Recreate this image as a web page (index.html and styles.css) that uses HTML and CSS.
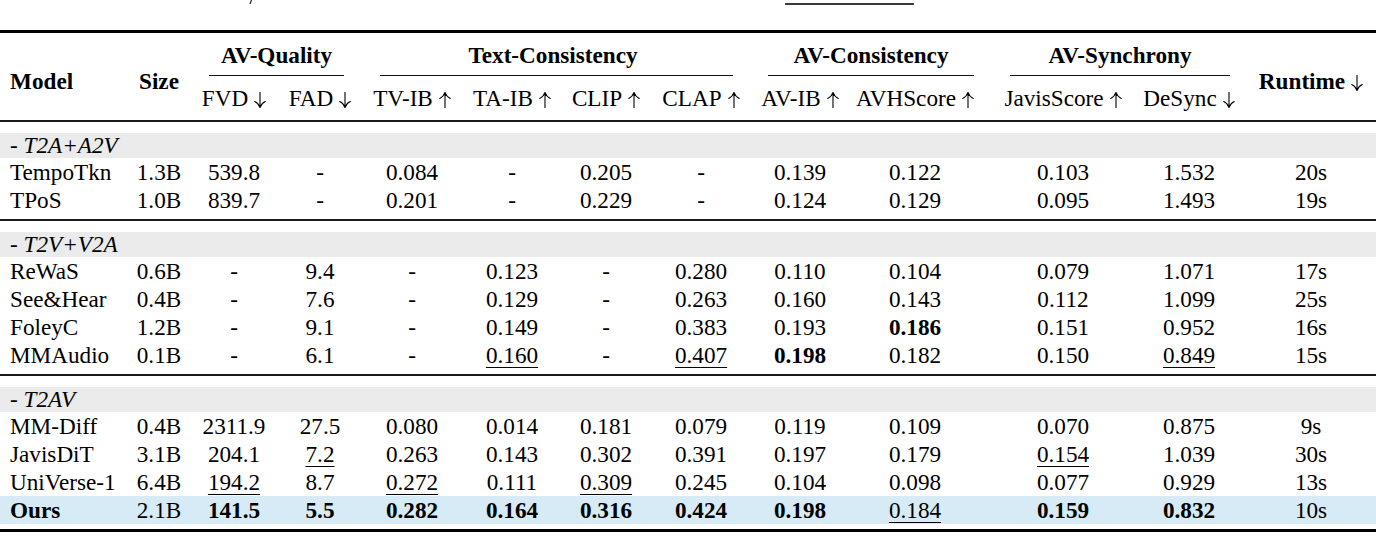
FILE: index.html
```html
<!DOCTYPE html>
<html lang="en">
<head>
<meta charset="utf-8">
<title>Comparison table</title>
<link rel="stylesheet" href="styles.css">
</head>
<body>
<svg class="defs" width="0" height="0" aria-hidden="true">
  <defs>
    <symbol id="down" viewBox="0 0 12 16"><path d="M6 0.3 V15.4 M0.7 9.6 Q4.6 11.3 6 15.6 Q7.4 11.3 11.3 9.6" fill="none" stroke="#000" stroke-width="1.1" stroke-linecap="round" stroke-linejoin="round"/></symbol>
    <symbol id="up" viewBox="0 0 12 16"><path d="M6 15.7 V0.6 M0.7 6.4 Q4.6 4.7 6 0.4 Q7.4 4.7 11.3 6.4" fill="none" stroke="#000" stroke-width="1.1" stroke-linecap="round" stroke-linejoin="round"/></symbol>
  </defs>
</svg>
<div class="page">
  <div class="strip">
    <svg class="tick" width="6" height="6" viewBox="0 0 6 6"><path d="M3.5 0 L2 4" stroke="#222" stroke-width="1.2" fill="none"/></svg>
    <span class="strip-line"></span>
  </div>

  <div class="rule-heavy"></div>

  <div class="grid head">
    <div class="cell l span2 hb">Model</div>
    <div class="cell span2 hb">Size</div>
    <div class="grp g-q"><span class="gt">AV-Quality</span><span class="cmid"></span></div>
    <div class="grp g-t"><span class="gt">Text-Consistency</span><span class="cmid"></span></div>
    <div class="grp g-c"><span class="gt">AV-Consistency</span><span class="cmid"></span></div>
    <div class="grp g-s"><span class="gt">AV-Synchrony</span><span class="cmid"></span></div>
    <div class="cell span2 hb rt">Runtime<svg class="arr"><use href="#down"/></svg></div>
    <div class="cell">FVD<svg class="arr"><use href="#down"/></svg></div>
    <div class="cell">FAD<svg class="arr"><use href="#down"/></svg></div>
    <div class="cell">TV-IB<svg class="arr"><use href="#up"/></svg></div>
    <div class="cell">TA-IB<svg class="arr"><use href="#up"/></svg></div>
    <div class="cell">CLIP<svg class="arr"><use href="#up"/></svg></div>
    <div class="cell">CLAP<svg class="arr"><use href="#up"/></svg></div>
    <div class="cell">AV-IB<svg class="arr"><use href="#up"/></svg></div>
    <div class="cell">AVHScore<svg class="arr"><use href="#up"/></svg></div>
    <div class="cell">JavisScore<svg class="arr"><use href="#up"/></svg></div>
    <div class="cell">DeSync<svg class="arr"><use href="#down"/></svg></div>
  </div>

  <div class="rule-mid"></div>

  <section class="block">
    <div class="band">- <i>T2A+A2V</i></div>
    <div class="grid row">
      <div class="cell l">TempoTkn</div><div class="cell">1.3B</div><div class="cell">539.8</div><div class="cell">-</div><div class="cell">0.084</div><div class="cell">-</div><div class="cell">0.205</div><div class="cell">-</div><div class="cell">0.139</div><div class="cell">0.122</div><div class="cell">0.103</div><div class="cell">1.532</div><div class="cell rt">20s</div>
    </div>
    <div class="grid row">
      <div class="cell l">TPoS</div><div class="cell">1.0B</div><div class="cell">839.7</div><div class="cell">-</div><div class="cell">0.201</div><div class="cell">-</div><div class="cell">0.229</div><div class="cell">-</div><div class="cell">0.124</div><div class="cell">0.129</div><div class="cell">0.095</div><div class="cell">1.493</div><div class="cell rt">19s</div>
    </div>
  </section>

  <div class="rule-mid"></div>

  <section class="block">
    <div class="band">- <i>T2V+V2A</i></div>
    <div class="grid row">
      <div class="cell l">ReWaS</div><div class="cell">0.6B</div><div class="cell">-</div><div class="cell">9.4</div><div class="cell">-</div><div class="cell">0.123</div><div class="cell">-</div><div class="cell">0.280</div><div class="cell">0.110</div><div class="cell">0.104</div><div class="cell">0.079</div><div class="cell">1.071</div><div class="cell rt">17s</div>
    </div>
    <div class="grid row">
      <div class="cell l">See&amp;Hear</div><div class="cell">0.4B</div><div class="cell">-</div><div class="cell">7.6</div><div class="cell">-</div><div class="cell">0.129</div><div class="cell">-</div><div class="cell">0.263</div><div class="cell">0.160</div><div class="cell">0.143</div><div class="cell">0.112</div><div class="cell">1.099</div><div class="cell rt">25s</div>
    </div>
    <div class="grid row">
      <div class="cell l">FoleyC</div><div class="cell">1.2B</div><div class="cell">-</div><div class="cell">9.1</div><div class="cell">-</div><div class="cell">0.149</div><div class="cell">-</div><div class="cell">0.383</div><div class="cell">0.193</div><div class="cell"><b>0.186</b></div><div class="cell">0.151</div><div class="cell">0.952</div><div class="cell rt">16s</div>
    </div>
    <div class="grid row">
      <div class="cell l">MMAudio</div><div class="cell">0.1B</div><div class="cell">-</div><div class="cell">6.1</div><div class="cell">-</div><div class="cell"><span class="u">0.160</span></div><div class="cell">-</div><div class="cell"><span class="u">0.407</span></div><div class="cell"><b>0.198</b></div><div class="cell">0.182</div><div class="cell">0.150</div><div class="cell"><span class="u">0.849</span></div><div class="cell rt">15s</div>
    </div>
  </section>

  <div class="rule-mid"></div>

  <section class="block">
    <div class="band">- <i>T2AV</i></div>
    <div class="grid row">
      <div class="cell l">MM-Diff</div><div class="cell">0.4B</div><div class="cell">2311.9</div><div class="cell">27.5</div><div class="cell">0.080</div><div class="cell">0.014</div><div class="cell">0.181</div><div class="cell">0.079</div><div class="cell">0.119</div><div class="cell">0.109</div><div class="cell">0.070</div><div class="cell">0.875</div><div class="cell rt">9s</div>
    </div>
    <div class="grid row">
      <div class="cell l">JavisDiT</div><div class="cell">3.1B</div><div class="cell">204.1</div><div class="cell"><span class="u">7.2</span></div><div class="cell">0.263</div><div class="cell">0.143</div><div class="cell">0.302</div><div class="cell">0.391</div><div class="cell">0.197</div><div class="cell">0.179</div><div class="cell"><span class="u">0.154</span></div><div class="cell">1.039</div><div class="cell rt">30s</div>
    </div>
    <div class="grid row">
      <div class="cell l">UniVerse-1</div><div class="cell">6.4B</div><div class="cell"><span class="u">194.2</span></div><div class="cell">8.7</div><div class="cell"><span class="u">0.272</span></div><div class="cell">0.111</div><div class="cell"><span class="u">0.309</span></div><div class="cell">0.245</div><div class="cell">0.104</div><div class="cell">0.098</div><div class="cell">0.077</div><div class="cell">0.929</div><div class="cell rt">13s</div>
    </div>
    <div class="grid row ours">
      <div class="cell l"><b>Ours</b></div><div class="cell">2.1B</div><div class="cell"><b>141.5</b></div><div class="cell"><b>5.5</b></div><div class="cell"><b>0.282</b></div><div class="cell"><b>0.164</b></div><div class="cell"><b>0.316</b></div><div class="cell"><b>0.424</b></div><div class="cell"><b>0.198</b></div><div class="cell"><span class="u">0.184</span></div><div class="cell"><b>0.159</b></div><div class="cell"><b>0.832</b></div><div class="cell rt">10s</div>
    </div>
  </section>

  <div class="rule-heavy bottom"></div>
</div>
</body>
</html>
```

FILE: styles.css
```css
html, body {
  margin: 0;
  padding: 0;
  background: #ffffff;
}

body {
  font-family: "Liberation Serif", "Times New Roman", serif;
  font-size: 23.2px;
  color: #000;
  overflow: hidden;
}

.defs {
  position: absolute;
  width: 0;
  height: 0;
  overflow: hidden;
}

.page {
  width: 1376px;
}

.strip {
  height: 30px;
  display: flex;
  align-items: flex-start;
}

.tick {
  margin-left: 248px;
  display: block;
}

.strip-line {
  margin-left: 531px;
  margin-top: 3px;
  width: 129px;
  height: 2px;
  background: #3a3a3a;
}

.rule-heavy {
  height: 3px;
  background: #000;
}

.rule-heavy.bottom {
  margin-top: 5px;
}

.rule-mid {
  height: 2px;
  background: #1a1a1a;
}

.block + .rule-mid {
  margin-top: 5px;
}

.grid {
  display: grid;
  grid-template-columns: 132px 54px 96px 76px 108px 92px 96px 94px 104px 126px 170px 82px 146px;
}

.head {
  grid-template-rows: 43px 44px;
}

.cell {
  display: flex;
  justify-content: center;
  align-items: center;
  white-space: nowrap;
  line-height: 28px;
}

.cell.l {
  justify-content: flex-start;
  padding-left: 10px;
}

.cell.rt {
  padding-left: 16px;
}

.arr {
  width: 12px;
  height: 16px;
  flex: none;
  margin-top: 3px;
  margin-left: 6px;
}

.span2 {
  grid-row: span 2;
  padding-top: 9px;
}

.hb {
  font-weight: bold;
}

.grp {
  display: flex;
  flex-direction: column;
  justify-content: flex-end;
  align-items: center;
  white-space: nowrap;
}

.gt {
  font-weight: bold;
  line-height: 28px;
  margin-bottom: 6px;
}

.cmid {
  align-self: stretch;
  height: 1px;
  background: #111;
}

.g-q { grid-column: 3 / span 2; }
.g-q .cmid { margin: 0 14px 0 23px; }
.g-q .gt { margin-left: 9px; }

.g-t { grid-column: 5 / span 4; }
.g-t .cmid { margin: 0 15px 0 22px; }

.g-c { grid-column: 9 / span 2; }
.g-c .cmid { margin: 0 4px 0 20px; }
.g-c .gt { margin-left: 16px; }

.g-s { grid-column: 11 / span 2; }
.g-s .cmid { margin: 0 0 0 32px; }
.g-s .gt { margin-left: 32px; }

.block {
  padding-top: 11px;
}

.band {
  height: 25px;
  line-height: 25px;
  background: #ebebeb;
  padding-left: 10px;
  white-space: nowrap;
}

.row {
  grid-template-rows: 28px;
}

.ours {
  background: #d6ebf5;
}

.u {
  text-decoration: underline;
  text-decoration-thickness: 1px;
  text-underline-offset: 4px;
}

b {
  font-weight: bold;
}
```
